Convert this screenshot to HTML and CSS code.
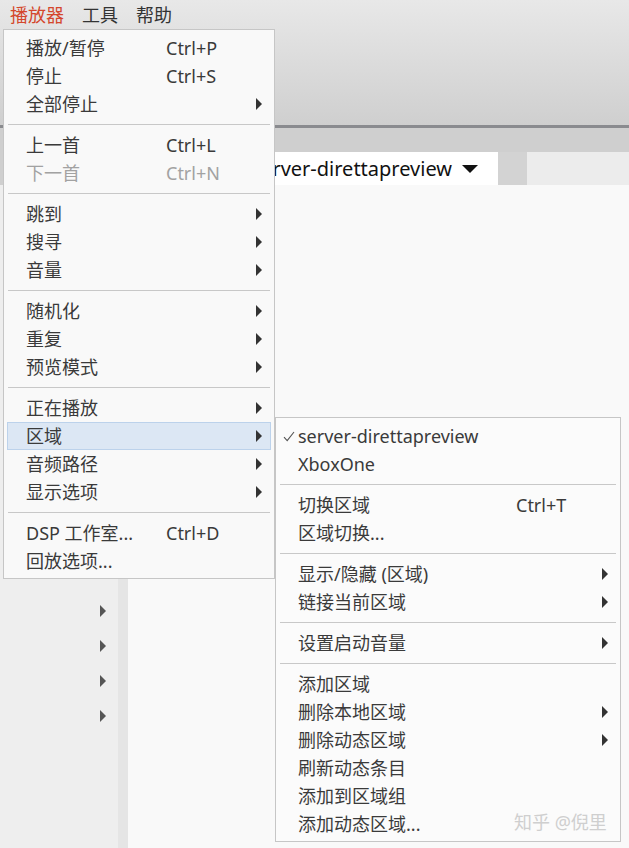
FILE: index.html
```html
<!DOCTYPE html>
<html lang="zh-CN">
  <head>
    <meta charset="UTF-8" />
    <meta name="viewport" content="width=device-width, initial-scale=1.0" />
    <title>播放器菜单</title>
    <link rel="stylesheet" href="styles.css">
  </head>
  <body>
    <div class="app">
      <div class="header">
        <nav class="menubar">
          <span class="menubar-item active">播放器</span>
          <span class="menubar-item">工具</span>
          <span class="menubar-item">帮助</span>
        </nav>
        <div class="toolbar"></div>
      </div>
      <div class="rule"></div>
      <div class="subbar"></div>
      <div class="tabrow">
        <div class="tab-lead"></div>
        <div class="tab">server-direttapreview <span class="caret"></span></div>
        <div class="tab-gap"></div>
        <div class="tab-rest"></div>
      </div>
      <div class="workspace">
        <aside class="side">
          <div class="side-row"><span class="arrow side-arrow"></span></div>
          <div class="side-row"><span class="arrow side-arrow"></span></div>
          <div class="side-row"><span class="arrow side-arrow"></span></div>
          <div class="side-row"><span class="arrow side-arrow"></span></div>
        </aside>
        <div class="strip"></div>
        <div class="content"></div>
      </div>

      <!-- player dropdown -->
      <div class="menu main-menu">
        <div class="item"><span></span><span>播放/暂停</span><span>Ctrl+P</span><span></span></div>
        <div class="item"><span></span><span>停止</span><span>Ctrl+S</span><span></span></div>
        <div class="item"><span></span><span>全部停止</span><span></span><span class="arrow"></span></div>
        <div class="sep"></div>
        <div class="item"><span></span><span>上一首</span><span>Ctrl+L</span><span></span></div>
        <div class="item disabled"><span></span><span>下一首</span><span>Ctrl+N</span><span></span></div>
        <div class="sep"></div>
        <div class="item"><span></span><span>跳到</span><span></span><span class="arrow"></span></div>
        <div class="item"><span></span><span>搜寻</span><span></span><span class="arrow"></span></div>
        <div class="item"><span></span><span>音量</span><span></span><span class="arrow"></span></div>
        <div class="sep"></div>
        <div class="item"><span></span><span>随机化</span><span></span><span class="arrow"></span></div>
        <div class="item"><span></span><span>重复</span><span></span><span class="arrow"></span></div>
        <div class="item"><span></span><span>预览模式</span><span></span><span class="arrow"></span></div>
        <div class="sep"></div>
        <div class="item"><span></span><span>正在播放</span><span></span><span class="arrow"></span></div>
        <div class="item hover"><span></span><span>区域</span><span></span><span class="arrow"></span></div>
        <div class="item"><span></span><span>音频路径</span><span></span><span class="arrow"></span></div>
        <div class="item"><span></span><span>显示选项</span><span></span><span class="arrow"></span></div>
        <div class="sep"></div>
        <div class="item"><span></span><span>DSP 工作室...</span><span>Ctrl+D</span><span></span></div>
        <div class="item"><span></span><span>回放选项...</span><span></span><span></span></div>
      </div>

      <!-- zone submenu -->
      <div class="menu sub-menu">
        <div class="item">
          <span class="check">
            <svg width="12" height="11" viewBox="0 0 12 11"><path d="M1 6.2 L4.2 9.6 L11 1" fill="none" stroke="#555" stroke-width="1.1"/></svg>
          </span>
          <span>server-direttapreview</span><span></span><span></span>
        </div>
        <div class="item"><span></span><span>XboxOne</span><span></span><span></span></div>
        <div class="sep"></div>
        <div class="item"><span></span><span>切换区域</span><span>Ctrl+T</span><span></span></div>
        <div class="item"><span></span><span>区域切换...</span><span></span><span></span></div>
        <div class="sep"></div>
        <div class="item"><span></span><span>显示/隐藏 (区域)</span><span></span><span class="arrow"></span></div>
        <div class="item"><span></span><span>链接当前区域</span><span></span><span class="arrow"></span></div>
        <div class="sep"></div>
        <div class="item"><span></span><span>设置启动音量</span><span></span><span class="arrow"></span></div>
        <div class="sep"></div>
        <div class="item"><span></span><span>添加区域</span><span></span><span></span></div>
        <div class="item"><span></span><span>删除本地区域</span><span></span><span class="arrow"></span></div>
        <div class="item"><span></span><span>删除动态区域</span><span></span><span class="arrow"></span></div>
        <div class="item"><span></span><span>刷新动态条目</span><span></span><span></span></div>
        <div class="item"><span></span><span>添加到区域组</span><span></span><span></span></div>
        <div class="item"><span></span><span>添加动态区域...</span><span></span><span></span></div>
      </div>

      <div class="watermark">知乎 @倪里</div>
    </div>
  </body>
</html>
```

FILE: styles.css
```css
*,
*::before,
*::after {
  box-sizing: border-box;
}

body {
  margin: 0;
  font-family: "Noto Sans", "Noto Sans CJK SC", sans-serif;
  color: #3a3a3a;
}

.app {
  position: relative;
  width: 629px;
  height: 848px;
  overflow: hidden;
  display: flex;
  flex-direction: column;
  background: #f9f9f9;
}

.app > * {
  flex-shrink: 0;
}

/* Window chrome behind the menus */

.header {
  height: 125px;
  background: linear-gradient(#e8e8e8, #cfcfcf);
}

.menubar {
  height: 30px;
  display: flex;
  align-items: center;
  padding-left: 10px;
  gap: 18px;
  font-size: 18px;
}

.menubar-item {
  color: #333;
  line-height: 30px;
}

.menubar-item.active {
  color: #d4472c;
}

.toolbar {
  height: 95px;
}

.rule {
  height: 3px;
  background: #8a8b8f;
}

.subbar {
  height: 24px;
  background: #cfcfcf;
}

.tabrow {
  height: 33px;
  display: flex;
  background: #ececec;
}

.tab-lead {
  width: 140px;
  background: #cfcfcf;
}

.tab {
  width: 358px;
  background: #fff;
  display: flex;
  align-items: center;
  justify-content: flex-end;
  gap: 10px;
  padding-right: 20px;
  font-size: 20px;
  color: #111;
}

.caret {
  width: 0;
  height: 0;
  border-left: 8px solid transparent;
  border-right: 8px solid transparent;
  border-top: 8px solid #111;
}

.tab-gap {
  width: 29px;
  background: #d3d3d3;
}

.tab-rest {
  flex: 1;
}

.workspace {
  flex: 1 1 auto;
  min-height: 0;
  display: flex;
  overflow: hidden;
}

.side {
  width: 118px;
  background: #eeeeee;
  padding-top: 408px;
}

.side-row {
  height: 35px;
  display: flex;
  align-items: center;
  justify-content: flex-end;
  padding-right: 12px;
}

.strip {
  width: 10px;
  background: #e5e5e5;
}

.content {
  flex: 1;
  background: #f9f9f9;
}

/* Menus */

.menu {
  position: absolute;
  background: #f9f9f9;
  border: 1px solid #c6c6c6;
  padding: 4px 3px 3px;
  font-size: 18px;
}

.main-menu {
  left: 3px;
  top: 29px;
  width: 272px;
  --label-w: 140px;
}

.sub-menu {
  left: 275px;
  top: 417px;
  width: 346px;
  background: #fbfbfb;
  --label-w: 218px;
}

.item {
  height: 28px;
  display: grid;
  grid-template-columns: 18px var(--label-w) 1fr 6px;
  align-items: center;
  padding-right: 8px;
  border: 1px solid transparent;
  line-height: 26px;
  white-space: nowrap;
}

.item.disabled {
  color: #a2a2a2;
}

.item.hover {
  background: #dce7f4;
  border-color: #bcd2eb;
}

.check {
  display: flex;
  align-items: center;
  padding-left: 3px;
}

.arrow {
  width: 0;
  height: 0;
  border-top: 6px solid transparent;
  border-bottom: 6px solid transparent;
  border-left: 6px solid #333;
}

.side-arrow {
  border-left-color: #555;
}

.sep {
  height: 1px;
  margin: 6px 1px;
  background: #c8c8c8;
}

.watermark {
  position: absolute;
  left: 514px;
  top: 808px;
  font-size: 18px;
  color: #cfcfcf;
  line-height: 28px;
}
```
